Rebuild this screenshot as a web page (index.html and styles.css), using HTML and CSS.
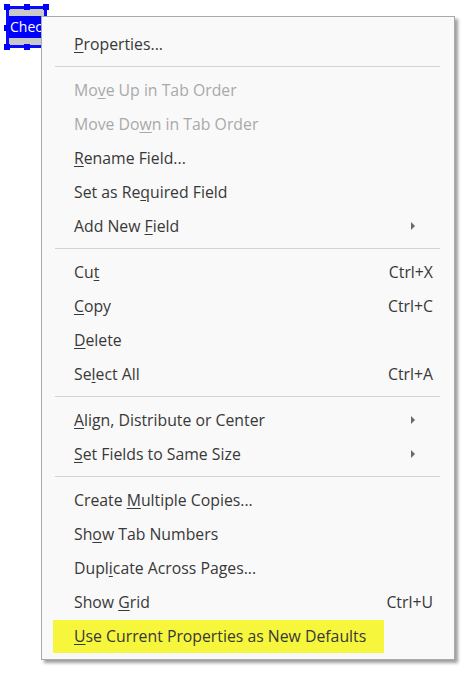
FILE: index.html
```html
<!DOCTYPE html>
<html>
<head>
<meta charset="utf-8">
<link rel="stylesheet" href="styles.css">
</head>
<body>
<div class="stage">
  <div class="field">
    <div class="field-band">Check</div>
    <span class="handle h-tl"></span>
    <span class="handle h-tm"></span>
    <span class="handle h-tr"></span>
    <span class="handle h-ml"></span>
    <span class="handle h-mr"></span>
    <span class="handle h-bl"></span>
    <span class="handle h-bm"></span>
    <span class="handle h-br"></span>
  </div>
  <div class="menu">
    <div class="item"><span class="label"><u>P</u>roperties...</span></div>
    <div class="sep"></div>
    <div class="item disabled"><span class="label">Mo<u>v</u>e Up in Tab Order</span></div>
    <div class="item disabled"><span class="label">Move Do<u>w</u>n in Tab Order</span></div>
    <div class="item"><span class="label"><u>R</u>ename Field...</span></div>
    <div class="item"><span class="label">Set as Re<u>q</u>uired Field</span></div>
    <div class="item"><span class="label">Add New <u>F</u>ield</span><span class="arrow"></span></div>
    <div class="sep"></div>
    <div class="item"><span class="label">Cu<u>t</u></span><span class="key">Ctrl+X</span></div>
    <div class="item"><span class="label"><u>C</u>opy</span><span class="key">Ctrl+C</span></div>
    <div class="item"><span class="label"><u>D</u>elete</span></div>
    <div class="item"><span class="label">Se<u>l</u>ect All</span><span class="key">Ctrl+A</span></div>
    <div class="sep"></div>
    <div class="item"><span class="label"><u>A</u>lign, Distribute or Center</span><span class="arrow"></span></div>
    <div class="item"><span class="label"><u>S</u>et Fields to Same Size</span><span class="arrow"></span></div>
    <div class="sep"></div>
    <div class="item"><span class="label">Create <u>M</u>ultiple Copies...</span></div>
    <div class="item"><span class="label">Sh<u>o</u>w Tab Numbers</span></div>
    <div class="item"><span class="label">Dupl<u>i</u>cate Across Pages...</span></div>
    <div class="item"><span class="label">Show <u>G</u>rid</span><span class="key">Ctrl+U</span></div>
    <div class="item item-hl"><span class="hl"><u>U</u>se Current Properties as New Defaults</span></div>
  </div>
</div>
</body>
</html>
```

FILE: styles.css
```css
html, body {
  margin: 0;
  padding: 0;
  background: #ffffff;
}

.stage {
  position: relative;
  width: 474px;
  height: 681px;
  font-family: "Open Sans", "Noto Sans", "DejaVu Sans", sans-serif;
}

.field {
  position: absolute;
  left: 6px;
  top: 6px;
  width: 35px;
  height: 36px;
  border: 3px solid #0a0aff;
  background: #c9c9c9;
  display: flex;
  align-items: center;
}

.field-band {
  width: 100%;
  height: 22px;
  background: #0000ff;
  color: #ffffff;
  font-size: 14px;
  line-height: 22px;
  padding-left: 1px;
  white-space: nowrap;
  box-sizing: border-box;
}

.handle {
  position: absolute;
  width: 6px;
  height: 6px;
  background: #0000ff;
}
.h-tl { left: -5px; top: -5px; }
.h-tm { left: 15px; top: -5px; }
.h-tr { right: -5px; top: -5px; }
.h-ml { left: -5px; top: 16px; }
.h-mr { right: -5px; top: 16px; }
.h-bl { left: -5px; bottom: -5px; }
.h-bm { left: 15px; bottom: -5px; }
.h-br { right: -5px; bottom: -5px; }

.menu {
  position: absolute;
  left: 41px;
  top: 16px;
  width: 412px;
  padding: 10px 0 6px 0;
  background: #f9f9f9;
  border: 1px solid #a9a9a9;
  box-shadow: 3px 3px 3px rgba(0, 0, 0, 0.38);
  display: flex;
  flex-direction: column;
  color: #383838;
  font-size: 15.8px;
}

.item {
  height: 34px;
  display: flex;
  align-items: center;
  padding: 0 21px 0 32px;
}

.item.disabled {
  color: #a9a9a9;
}

.label {
  flex: 1;
  white-space: nowrap;
}

.label u, .hl u {
  text-underline-offset: 2px;
  text-decoration-thickness: 1px;
}

.key {
  white-space: nowrap;
}

.arrow {
  width: 0;
  height: 0;
  border-top: 4px solid transparent;
  border-bottom: 4px solid transparent;
  border-left: 4px solid #6a6a6a;
  margin-right: 18px;
}

.sep {
  height: 1px;
  margin: 5px 14px 6px 13px;
  background: #d3d3d3;
}

.item-hl {
  padding-left: 11px;
}

.hl {
  width: 331px;
  height: 33px;
  box-sizing: border-box;
  padding-left: 21px;
  background: #f6f63c;
  display: flex;
  align-items: center;
  white-space: nowrap;
}
```
